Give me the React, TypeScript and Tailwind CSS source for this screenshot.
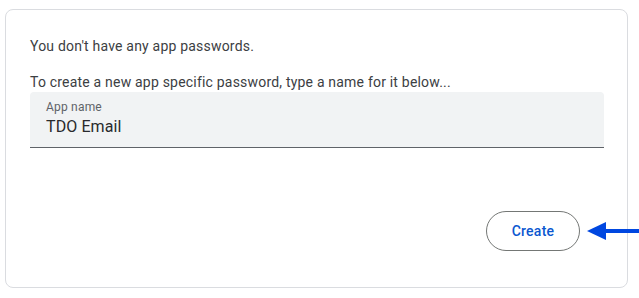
import { useState } from 'react'

// ── App passwords card ───────────────────────────────────────────────────────
export default function App() {
  const [name, setName] = useState('TDO Email')

  return (
    <div className="relative w-[639px] h-[298px] bg-white font-['Roboto',sans-serif] overflow-hidden">
      <div className="absolute left-[5px] top-[9px] w-[623px] h-[279px] rounded-lg border border-[#dadce0] bg-white pl-[24px] pr-[23px] pt-[26px]">
        <p className="text-[14px] leading-[20px] tracking-[0.2px] text-[#3c4043]">You don't have any app passwords.</p>
        <p className="mt-[16px] text-[14px] leading-[20px] tracking-[0.2px] text-[#3c4043]">
          To create a new app specific password, type a name for it below...
        </p>

        {/* Filled text field */}
        <label className="block w-[574px] h-[56px] rounded-t bg-[#f1f3f4] border-b border-[#5f6368] pl-[16px] pt-[7px]">
          <span className="block text-[12px] leading-[16px] tracking-[0.2px] text-[#5f6368]">App name</span>
          <input
            value={name}
            onChange={e => setName(e.target.value)}
            className="block w-full bg-transparent outline-none text-[16px] leading-[24px] tracking-[0.1px] text-[#282a2d]"
          />
        </label>

        <div className="flex justify-end pr-[24px] mt-[63px]">
          <button className="w-[94px] h-[40px] rounded-full border border-[#747775] text-[14px] font-medium tracking-[0.25px] text-[#0b57d0]">
            Create
          </button>
        </div>
      </div>

      {/* Annotation arrow */}
      <svg className="absolute left-[586px] top-[221px]" width="53" height="20" viewBox="0 0 53 20">
        <polygon points="1,10 20,1 20,19" fill="#0047e0" />
        <rect x="18" y="8" width="35" height="4" fill="#0047e0" />
      </svg>
    </div>
  )
}
